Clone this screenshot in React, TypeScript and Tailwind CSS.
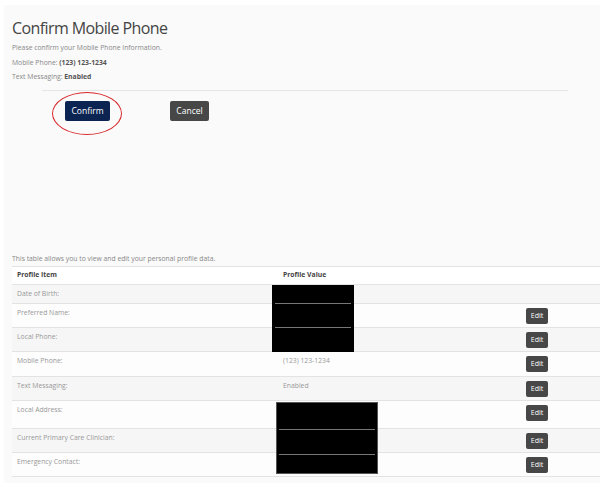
import React from 'react';

type Row = { label: string; value?: string; h: string; edit: boolean; stripe: boolean };

const rows: Row[] = [
  { label: 'Date of Birth:', h: 'h-[19px]', edit: false, stripe: true },
  { label: 'Preferred Name:', h: 'h-[24px]', edit: true, stripe: false },
  { label: 'Local Phone:', h: 'h-[24px]', edit: true, stripe: true },
  { label: 'Mobile Phone:', value: '(123) 123-1234', h: 'h-[25px]', edit: true, stripe: false },
  { label: 'Text Messaging:', value: 'Enabled', h: 'h-[24px]', edit: true, stripe: true },
  { label: 'Local Address:', h: 'h-[28px]', edit: true, stripe: false },
  { label: 'Current Primary Care Clinician:', h: 'h-[24px]', edit: true, stripe: true },
  { label: 'Emergency Contact:', h: 'h-[24px]', edit: true, stripe: false },
];

const App: React.FC = () => {
  return (
    <div className="w-[600px] h-[489px] overflow-hidden bg-white font-['Open_Sans',sans-serif]">
      <div className="mt-[5px] ml-[4px] h-[478px] bg-[#fafafa] pl-[8px]">
        <h1 className="pt-[12px] text-[16px] leading-[22px] tracking-[-0.6px] text-[#444]">Confirm Mobile Phone</h1>
        <div className="mt-[4px] flex flex-col gap-[5.5px] text-[6.8px] leading-[9px] text-[#888]">
          <p>Please confirm your Mobile Phone Information.</p>
          <p>
            Mobile Phone: <b className="text-[#555]">(123) 123-1234</b>
          </p>
          <p>
            Text Messaging: <b className="text-[#555]">Enabled</b>
          </p>
        </div>

        <div className="ml-[30px] mt-[9px] w-[526px] border-t border-[#e6e6e6]">
          <div className="relative flex pt-[10px] pl-[23px]">
            <button className="h-[20px] w-[45px] rounded-[2px] bg-[#0b2452] text-[8.5px] text-white">Confirm</button>
            <button className="ml-[60px] h-[20px] w-[39px] rounded-[2px] bg-[#474747] text-[8.5px] text-white">Cancel</button>
            <div className="absolute left-[10px] top-[1px] h-[43px] w-[70px] rounded-[50%] border-[1.5px] border-[#d8282c]" />
          </div>
        </div>

        <p className="mt-[133px] text-[6.8px] leading-[9px] text-[#888]">
          This table allows you to view and edit your personal profile data.
        </p>

        <div className="relative mt-[3px] border-t border-[#e3e3e3]">
          <div className="flex h-[18px] items-center border-b border-[#e3e3e3] bg-white text-[6.8px] font-bold text-[#444]">
            <div className="w-[266px] pl-[5px]">Profile Item</div>
            <div className="pl-[5px]">Profile Value</div>
          </div>
          {rows.map((r) => (
            <div
              key={r.label}
              className={`flex border-b border-[#e3e3e3] text-[6.8px] text-[#999] ${r.h} ${r.stripe ? 'bg-[#f6f6f6]' : 'bg-[#fdfdfd]'}`}
            >
              <div className="w-[266px] pl-[5px] pt-[4px]">{r.label}</div>
              <div className="w-[242px] pl-[5px] pt-[4px]">{r.value}</div>
              <div className="pl-[6px] pt-[4px]">
                {r.edit && (
                  <button className="h-[16px] w-[22px] rounded-[2px] bg-[#474747] text-[7px] text-white">Edit</button>
                )}
              </div>
            </div>
          ))}

          <div className="absolute left-[260px] top-[18px] h-[67px] w-[82px] bg-black">
            <div className="mt-[18px] mx-[3px] h-px bg-[#777]" />
            <div className="mt-[23px] mx-[3px] h-px bg-[#777]" />
          </div>
          <div className="absolute left-[264px] top-[135px] h-[72px] w-[102px] border border-[#555] bg-black">
            <div className="mt-[26px] mx-[2px] h-px bg-[#777]" />
            <div className="mt-[24px] mx-[2px] h-px bg-[#777]" />
          </div>
        </div>
      </div>
    </div>
  );
};

export default App;
